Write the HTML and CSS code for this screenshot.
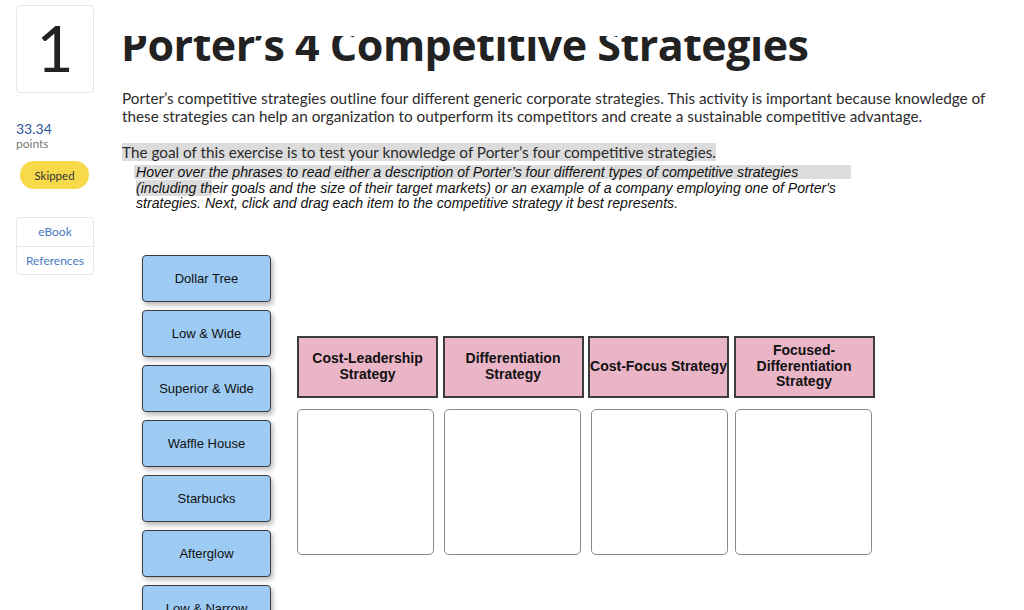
FILE: index.html
```html
<!DOCTYPE html>
<html>
<head>
<meta charset="utf-8">
<link rel="stylesheet" href="styles.css">
</head>
<body>
<div class="page">
  <aside class="sidebar">
    <div class="qnum">1</div>
    <div class="score">33.34</div>
    <div class="score-label">points</div>
    <div class="status">Skipped</div>
    <div class="links">
      <div class="link">eBook</div>
      <div class="link">References</div>
    </div>
  </aside>
  <main class="main">
    <div class="title-clip"><h1 class="title">Porter’s 4 Competitive Strategies</h1></div>
    <p class="intro">Porter’s competitive strategies outline four different generic corporate strategies. This activity is important because knowledge of these strategies can help an organization to outperform its competitors and create a sustainable competitive advantage.</p>
    <p class="goal"><span class="hl">The goal of this exercise is to test your knowledge of Porter’s four competitive strategies.</span></p>
    <p class="instr">Hover over the phrases to read either a description of Porter’s four different types of competitive strategies <span class="hl2">(including th</span>eir goals and the size of their target markets) or an example of a company employing one of Porter's strategies. Next, click and drag each item to the competitive strategy it best represents.</p>
    <div class="dnd">
      <div class="items">
        <div class="item">Dollar Tree</div>
        <div class="item">Low &amp; Wide</div>
        <div class="item">Superior &amp; Wide</div>
        <div class="item">Waffle House</div>
        <div class="item">Starbucks</div>
        <div class="item">Afterglow</div>
        <div class="item">Low &amp; Narrow</div>
      </div>
      <div class="board">
        <div class="heads">
          <div class="head">Cost-Leadership<br>Strategy</div>
          <div class="head">Differentiation<br>Strategy</div>
          <div class="head">Cost-Focus Strategy</div>
          <div class="head">Focused-<br>Differentiation<br>Strategy</div>
        </div>
        <div class="zones">
          <div class="zone"></div>
          <div class="zone"></div>
          <div class="zone"></div>
          <div class="zone z4"></div>
        </div>
      </div>
    </div>
  </main>
</div>
</body>
</html>
```
FILE: styles.css
```css
html, body {
  margin: 0;
  padding: 0;
  background: #fff;
  overflow: hidden;
}
body {
  font-family: Lato, "Liberation Sans", sans-serif;
  color: #2b2b2b;
  width: 1024px;
  height: 610px;
}
.page {
  display: flex;
  align-items: flex-start;
}
.sidebar {
  width: 78px;
  margin-left: 16px;
  padding-top: 5px;
  display: flex;
  flex-direction: column;
}
.qnum {
  box-sizing: border-box;
  height: 88px;
  border: 1px solid #e6e6e6;
  border-radius: 4px;
  display: flex;
  align-items: center;
  justify-content: center;
  font-size: 64px;
  font-weight: 400;
  color: #222;
  line-height: 1;
  padding-bottom: 2px;
}
.score {
  margin-top: 27px;
  font-size: 14px;
  line-height: 17px;
  color: #2c5698;
}
.score-label {
  font-size: 12px;
  line-height: 14px;
  color: #777;
}
.status {
  margin: 10px 0 0 4px;
  width: 69px;
  height: 28px;
  border-radius: 14px;
  background: #f8d94a;
  color: #333;
  font-size: 11.5px;
  display: flex;
  align-items: center;
  justify-content: center;
}
.links {
  margin-top: 28px;
  box-sizing: border-box;
  border: 1px solid #e6e6e6;
  border-radius: 4px;
  height: 58px;
  display: flex;
  flex-direction: column;
}
.link {
  flex: 1;
  display: flex;
  align-items: center;
  justify-content: center;
  font-size: 12px;
  color: #4a7ac2;
}
.link + .link {
  border-top: 1px solid #e6e6e6;
}
.main {
  margin-left: 28px;
  width: 880px;
}
.title-clip {
  margin-top: 36px;
  height: 36px;
  overflow: hidden;
}
.title {
  margin: -13px 0 0 -1px;
  font-family: "Open Sans", Lato, sans-serif;
  font-size: 43px;
  line-height: 44px;
  font-weight: 700;
  letter-spacing: -0.5px;
  color: #222;
  white-space: nowrap;
}
.intro {
  margin: 18px 0 0 0;
  font-size: 15.3px;
  line-height: 17.5px;
  color: #2b2b2b;
}
.goal {
  margin: 18px 0 0 0;
  font-size: 15.3px;
  line-height: 18px;
}
.hl {
  background: #dcdcdc;
}
.instr {
  margin: 4px 0 0 12px;
  padding-left: 2px;
  width: 715px;
  font-family: "Liberation Sans", Arial, sans-serif;
  font-style: italic;
  font-size: 14.1px;
  line-height: 15.5px;
  color: #111;
  background: linear-gradient(to bottom, #dcdcdc 0, #dcdcdc 14px, transparent 14px);
}
.hl2 {
  background: #dcdcdc;
}
.dnd {
  margin: 43px 0 0 20px;
  display: flex;
  align-items: flex-start;
}
.items {
  display: flex;
  flex-direction: column;
  gap: 8px;
}
.item {
  box-sizing: border-box;
  width: 129px;
  height: 47px;
  background: #9dcbf4;
  border: 1px solid #3c3c3c;
  border-radius: 4px;
  box-shadow: 2px 3px 5px rgba(0, 0, 0, 0.28);
  display: flex;
  align-items: center;
  justify-content: center;
  font-family: "Liberation Sans", Arial, sans-serif;
  font-size: 13px;
  color: #111;
}
.board {
  margin: 81px 0 0 26px;
}
.heads {
  display: flex;
  gap: 4.5px;
}
.head {
  box-sizing: border-box;
  width: 141px;
  height: 62px;
  background: #ebb5c8;
  border: 2px solid #3c3c3c;
  display: flex;
  align-items: center;
  justify-content: center;
  text-align: center;
  font-family: "Liberation Sans", Arial, sans-serif;
  font-weight: 700;
  font-size: 14px;
  line-height: 15.5px;
  color: #111;
  white-space: nowrap;
}
.zones {
  margin-top: 11px;
  display: flex;
  gap: 10px;
}
.zone {
  box-sizing: border-box;
  width: 137px;
  height: 146px;
  border: 1px solid #8a8a8a;
  border-radius: 5px;
  background: #fff;
}
.zone.z4 {
  margin-left: -3px;
}
```
